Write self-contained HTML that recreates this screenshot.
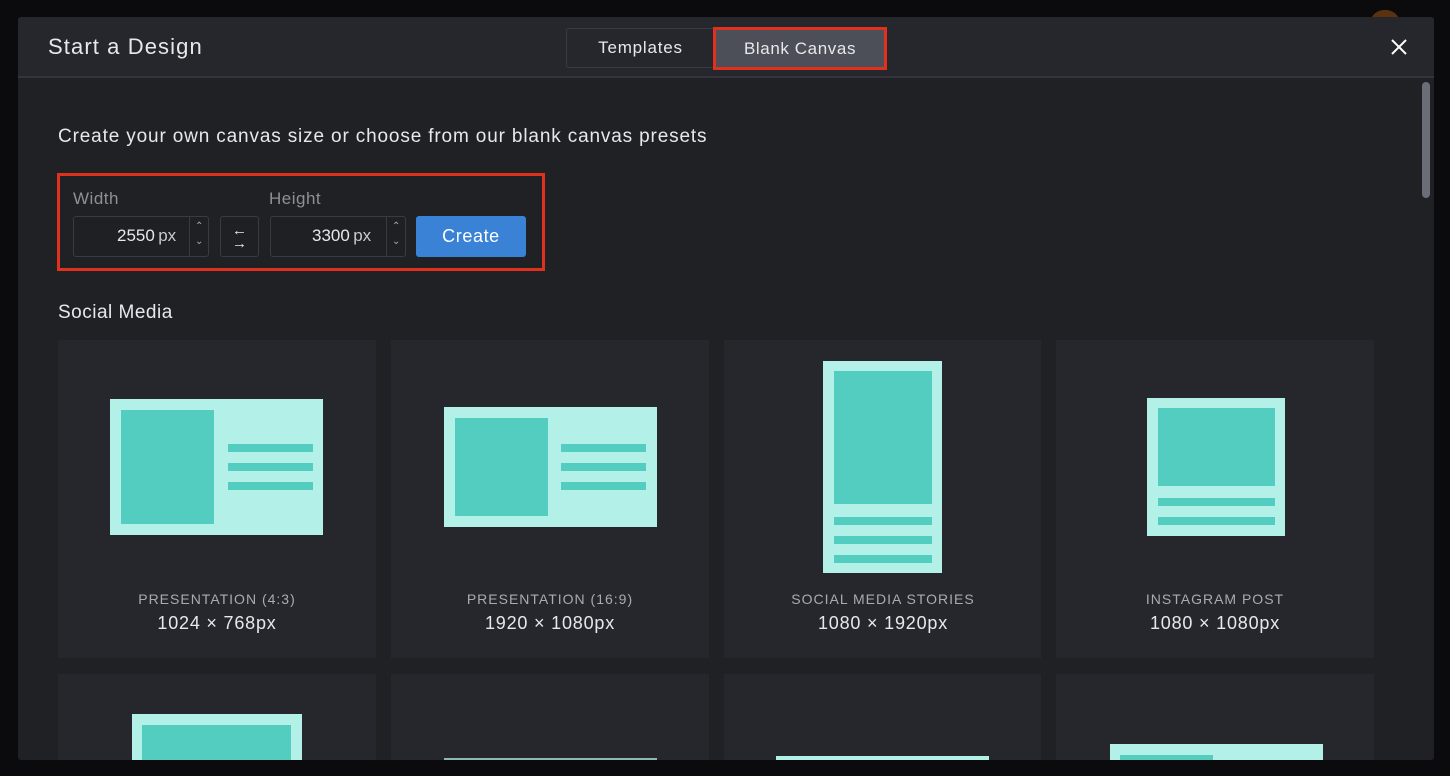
<!DOCTYPE html><html><head><style>
*{margin:0;padding:0;box-sizing:border-box}
body{width:1450px;height:776px;background:#0b0b0d;font-family:"Liberation Sans",sans-serif;position:relative;overflow:hidden;color:#e8e8ea}
.a{position:absolute}
.modal{left:18px;top:17px;width:1416px;height:743px;background:#202125;overflow:hidden;border-radius:3px}
.hdr{left:0;top:0;width:1416px;height:61px;background:#26272d;border-bottom:2px solid #34353c}
.card{background:#26272c;width:318px;height:318px}
.l{background:#b3f0e8}.t{background:#52cdbf}
.lab{width:318px;text-align:center;color:#a9abb0;font-size:14px;letter-spacing:1px}
.dim{width:318px;text-align:center;color:#e8e8ea;font-size:18px;letter-spacing:0.8px}
.inp{background:#1f2024;border:1px solid #3a3b42;border-radius:3px}
</style></head><body>
<div class="a" style="left:1370px;top:10px;width:30px;height:14px;border-radius:15px 15px 0 0;background:#5a3210"></div>
<div class="a modal">
 <div class="a hdr"></div>
 <div class="a" style="left:30px;top:17px;font-size:22px;color:#e8e8ea;letter-spacing:1.1px">Start a Design</div>
 <div class="a" style="left:548px;top:11px;width:148px;height:40px;border:1px solid #3a3b42;border-right:none;border-radius:3px 0 0 3px;text-align:center;line-height:38px;font-size:17px;letter-spacing:0.8px">Templates</div>
 <div class="a" style="left:695px;top:10px;width:174px;height:43px;background:#4d4f58;border:3px solid #e0301e;text-align:center;line-height:37px;font-size:17px;letter-spacing:0.6px">Blank Canvas</div>
 <svg class="a" style="left:1372px;top:21px" width="18" height="18" viewBox="0 0 18 18"><path d="M2 2L16 16M16 2L2 16" stroke="#fff" stroke-width="2"/></svg>
 <div class="a" style="left:1404px;top:65px;width:8px;height:116px;background:#6b6d78;border-radius:4px"></div>
 <div class="a" style="left:40px;top:109px;font-size:19px;color:#e8e8ea;letter-spacing:0.85px">Create your own canvas size or choose from our blank canvas presets</div>
 <div class="a" style="left:39px;top:156px;width:488px;height:98px;border:3px solid #e0301e"></div>
 <div class="a" style="left:55px;top:172px;font-size:17px;color:#8e9096;letter-spacing:0.5px">Width</div>
 <div class="a" style="left:251px;top:172px;font-size:17px;color:#8e9096;letter-spacing:0.5px">Height</div>
 <div class="a inp" style="left:55px;top:199px;width:136px;height:41px"></div>
 <div class="a" style="left:99px;top:209px;font-size:17px">2550<span style="color:#c8c9cc">&thinsp;px</span></div>
 <div class="a" style="left:171px;top:199px;width:1px;height:41px;background:#3a3b42"></div>
 <div class="a" style="left:177px;top:202px;font-size:10px;color:#aaa;line-height:15px">&#8963;<br>&#8964;</div>
 <div class="a inp" style="left:202px;top:199px;width:39px;height:41px;text-align:center;font-size:15px;line-height:13px;padding-top:7px">&#8592;<br>&#8594;</div>
 <div class="a inp" style="left:252px;top:199px;width:136px;height:41px"></div>
 <div class="a" style="left:294px;top:209px;font-size:17px">3300<span style="color:#c8c9cc">&thinsp;px</span></div>
 <div class="a" style="left:368px;top:199px;width:1px;height:41px;background:#3a3b42"></div>
 <div class="a" style="left:374px;top:202px;font-size:10px;color:#aaa;line-height:15px">&#8963;<br>&#8964;</div>
 <div class="a" style="left:398px;top:199px;width:110px;height:41px;background:#3a82d6;border-radius:3px;text-align:center;line-height:41px;font-size:18px;color:#fff;letter-spacing:0.6px">Create</div>
 <div class="a" style="left:40px;top:285px;font-size:19px;letter-spacing:0.5px">Social Media</div>
</div>
<div class="a card" style="left:58px;top:340px"></div>
<div class="a card" style="left:391px;top:340px"></div>
<div class="a card" style="left:724px;top:340px;width:317px"></div>
<div class="a card" style="left:1056px;top:340px"></div>
<div class="a card" style="left:58px;top:674px;height:86px"></div>
<div class="a card" style="left:391px;top:674px;height:86px"></div>
<div class="a card" style="left:724px;top:674px;height:86px;width:317px"></div>
<div class="a card" style="left:1056px;top:674px;height:86px"></div>
<div class="a l" style="left:110px;top:399px;width:213px;height:136px"></div>
<div class="a t" style="left:121px;top:410px;width:93px;height:114px"></div>
<div class="a t" style="left:228px;top:444px;width:85px;height:8px"></div>
<div class="a t" style="left:228px;top:463px;width:85px;height:8px"></div>
<div class="a t" style="left:228px;top:482px;width:85px;height:8px"></div>
<div class="a l" style="left:444px;top:407px;width:213px;height:120px"></div>
<div class="a t" style="left:455px;top:418px;width:93px;height:98px"></div>
<div class="a t" style="left:561px;top:444px;width:85px;height:8px"></div>
<div class="a t" style="left:561px;top:463px;width:85px;height:8px"></div>
<div class="a t" style="left:561px;top:482px;width:85px;height:8px"></div>
<div class="a l" style="left:823px;top:361px;width:119px;height:212px"></div>
<div class="a t" style="left:834px;top:371px;width:98px;height:133px"></div>
<div class="a t" style="left:834px;top:517px;width:98px;height:8px"></div>
<div class="a t" style="left:834px;top:536px;width:98px;height:8px"></div>
<div class="a t" style="left:834px;top:555px;width:98px;height:8px"></div>
<div class="a l" style="left:1147px;top:398px;width:138px;height:138px"></div>
<div class="a t" style="left:1158px;top:408px;width:117px;height:78px"></div>
<div class="a t" style="left:1158px;top:498px;width:117px;height:8px"></div>
<div class="a t" style="left:1158px;top:517px;width:117px;height:8px"></div>
<div class="a lab" style="left:58px;top:591px">PRESENTATION (4:3)</div>
<div class="a dim" style="left:58px;top:613px">1024 × 768px</div>
<div class="a lab" style="left:391px;top:591px">PRESENTATION (16:9)</div>
<div class="a dim" style="left:391px;top:613px">1920 × 1080px</div>
<div class="a lab" style="left:724px;top:591px">SOCIAL MEDIA STORIES</div>
<div class="a dim" style="left:724px;top:613px">1080 × 1920px</div>
<div class="a lab" style="left:1056px;top:591px">INSTAGRAM POST</div>
<div class="a dim" style="left:1056px;top:613px">1080 × 1080px</div>
<div class="a l" style="left:132px;top:714px;width:170px;height:46px"></div>
<div class="a t" style="left:142px;top:725px;width:149px;height:35px"></div>
<div class="a" style="left:444px;top:758px;width:213px;height:2px;background:#8fb8b4"></div>
<div class="a l" style="left:776px;top:756px;width:213px;height:4px"></div>
<div class="a l" style="left:1110px;top:744px;width:213px;height:16px"></div>
<div class="a t" style="left:1120px;top:755px;width:93px;height:5px"></div>
</body></html>
